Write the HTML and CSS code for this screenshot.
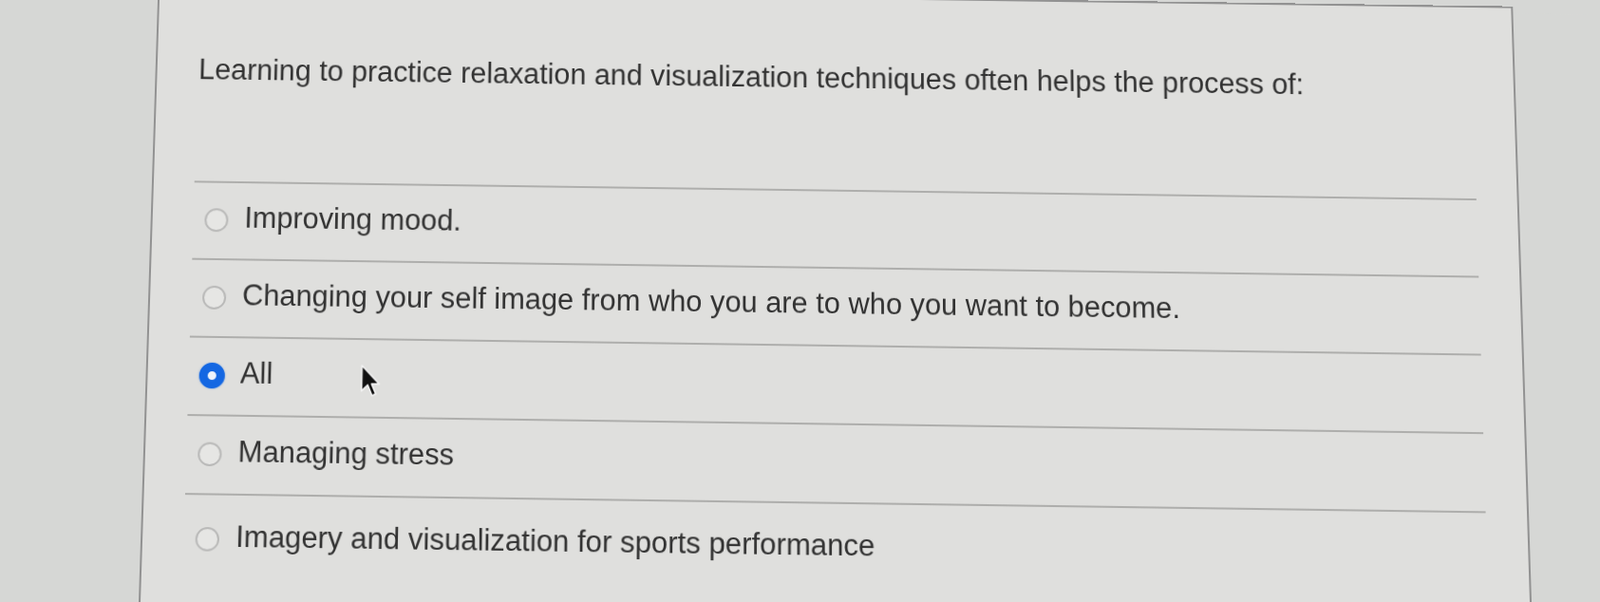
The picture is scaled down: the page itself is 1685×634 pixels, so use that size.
FILE: index.html
```html
<!DOCTYPE html>
<html lang="en">
<head>
<meta charset="utf-8">
<title>Question</title>
<link rel="stylesheet" href="styles.css">
</head>
<body>
<div class="screen">
  <div class="panel">
    <p class="question">Learning to practice relaxation and visualization techniques often helps the process of:</p>
    <ul class="options">
      <li class="option"><span class="radio"></span><span class="label">Improving mood.</span></li>
      <li class="option"><span class="radio"></span><span class="label">Changing your self image from who you are to who you want to become.</span></li>
      <li class="option"><span class="radio radio-checked"></span><span class="label">All</span>
        <svg class="cursor" width="22" height="36" viewBox="0 0 19 31"><path d="M1.5 1.5 V24.5 L7 19 L11 28.5 L14.5 27 L10.5 18 H17.5 Z" fill="#111" stroke="#f2f2f2" stroke-width="1.4" stroke-linejoin="round"/></svg>
      </li>
      <li class="option"><span class="radio"></span><span class="label">Managing stress</span></li>
      <li class="option option-last"><span class="radio"></span><span class="label">Imagery and visualization for sports performance</span></li>
    </ul>
  </div>
</div>
</body>
</html>
```
FILE: styles.css
```css
html, body {
  margin: 0;
  padding: 0;
  overflow: hidden;
  background: #d6d7d5;
}
body {
  width: 1685px;
  height: 634px;
  font-family: "Liberation Sans", Arial, sans-serif;
}
.screen {
  width: 1685px;
  height: 680px;
  display: flex;
  align-items: flex-start;
  background: #d6d7d5;
  transform-origin: 880px 317px;
  transform: perspective(1000px) rotateX(2.5deg) skewY(0.8deg);
}
.panel {
  box-sizing: border-box;
  margin: -8px 0 0 156px;
  width: 1447px;
  height: 720px;
  background: #dfdfdd;
  border: 2px solid #929292;
  border-bottom: none;
  padding-top: 69px;
}
.question {
  margin: 0 0 102px 44px;
  font-size: 30.8px;
  line-height: 34px;
  color: #323232;
}
.options {
  list-style: none;
  margin: 0 43px;
  padding: 0;
}
.option {
  position: relative;
  box-sizing: border-box;
  height: 82px;
  border-top: 2px solid #aeaeac;
  display: flex;
  align-items: flex-start;
  gap: 17px;
  padding: 20px 0 0 12px;
}
.option-last {
  padding-top: 26px;
}
.radio {
  flex: none;
  box-sizing: border-box;
  width: 25px;
  height: 25px;
  margin-top: 7px;
  border-radius: 50%;
  border: 2px solid #b9b9b8;
  background: #e6e6e4;
}
.radio-checked {
  width: 27px;
  height: 27px;
  margin: 6px -1px 0 -1px;
  border: 9px solid #1467e2;
  background: #eef3fb;
  box-shadow: 0 0 2px rgba(20, 103, 226, 0.5);
}
.label {
  font-size: 30.8px;
  line-height: 34px;
  color: #323232;
  white-space: nowrap;
}
.cursor {
  position: absolute;
  left: 180px;
  top: 25px;
}
```
